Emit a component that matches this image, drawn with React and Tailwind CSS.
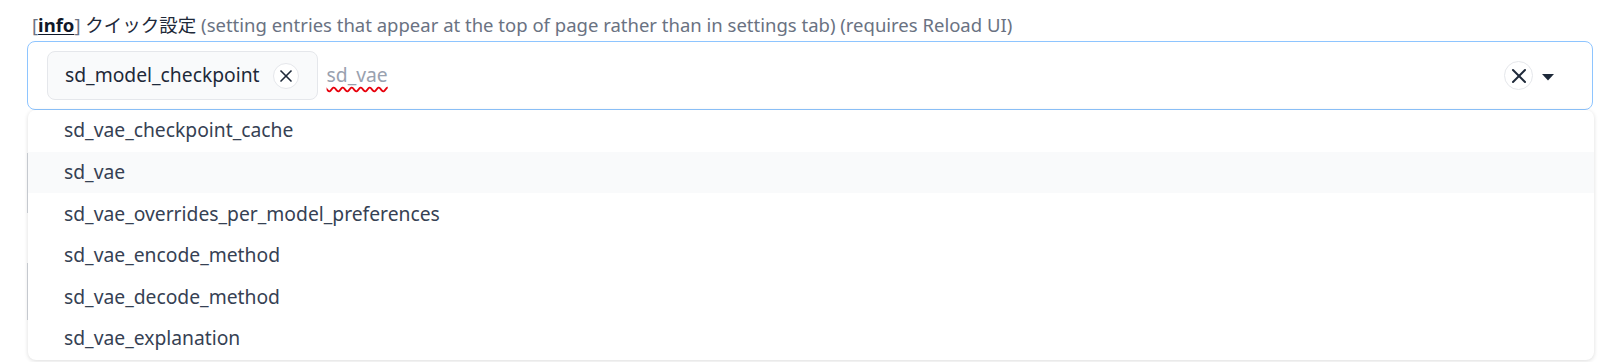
import { X } from 'lucide-react';

const OPTIONS = [
  'sd_vae_checkpoint_cache',
  'sd_vae',
  'sd_vae_overrides_per_model_preferences',
  'sd_vae_encode_method',
  'sd_vae_decode_method',
  'sd_vae_explanation',
];

export default function App() {
  return (
    <div className="w-full h-[362px] bg-white overflow-hidden font-['Noto_Sans','Noto_Sans_CJK_JP',sans-serif]">
      <div className="pl-[27px] pr-[13px] pt-[12px]">
        {/* label */}
        <div className="pl-[5px] text-[18.5px] leading-[26px] text-gray-500 whitespace-nowrap">
          <span>[</span>
          <span className="font-bold text-gray-900 underline underline-offset-2">info</span>
          <span>] </span>
          <span className="text-gray-800">クイック設定 </span>
          <span>(setting entries that appear at the top of page rather than in settings tab) (requires Reload UI)</span>
        </div>

        {/* multiselect */}
        <div className="relative mt-[3px]">
          <div className="h-[69px] flex items-center pl-[19px] pr-[38px] border border-blue-300 rounded-lg bg-white">
            <div className="h-[49px] flex items-center gap-[13px] pl-[17px] pr-[18px] bg-gray-50 border border-gray-200 rounded-lg">
              <span className="text-[19.3px] text-gray-800">sd_model_checkpoint</span>
              <span className="w-[26px] h-[26px] rounded-full border border-gray-200 bg-white flex items-center justify-center text-gray-800">
                <X size={20} strokeWidth={2} />
              </span>
            </div>
            <span className="ml-[9px] text-[19.3px] text-gray-400 underline decoration-wavy decoration-red-600 underline-offset-4">sd_vae</span>
            <div className="ml-auto flex items-center gap-[9px]">
              <span className="w-[29px] h-[29px] rounded-full border border-gray-200 bg-white flex items-center justify-center text-gray-800">
                <X size={24} strokeWidth={2} />
              </span>
              <svg width="12" height="7" viewBox="0 0 12 7" className="text-gray-800 mt-[3px]">
                <path d="M0 0 L12 0 L6 6.5 Z" fill="currentColor" />
              </svg>
            </div>
          </div>

          {/* rows behind the open menu */}
          <div className="flex flex-col gap-[50px] pt-[43px]">
            <div className="h-[60px] border-l border-gray-300" />
            <div className="h-[57px] border-l border-gray-300" />
          </div>

          {/* dropdown */}
          <ul className="absolute left-px right-[-1px] top-[69px] bg-white rounded-lg shadow-[0_1px_4px_rgba(0,0,0,0.14)]">
            {OPTIONS.map((opt, i) => (
              <li
                key={opt}
                className={`h-[41.6px] flex items-center pl-[36px] text-[19.3px] text-gray-700 ${i === 1 ? 'bg-gray-50' : ''}`}
              >
                {opt}
              </li>
            ))}
          </ul>
        </div>
      </div>
    </div>
  );
}
